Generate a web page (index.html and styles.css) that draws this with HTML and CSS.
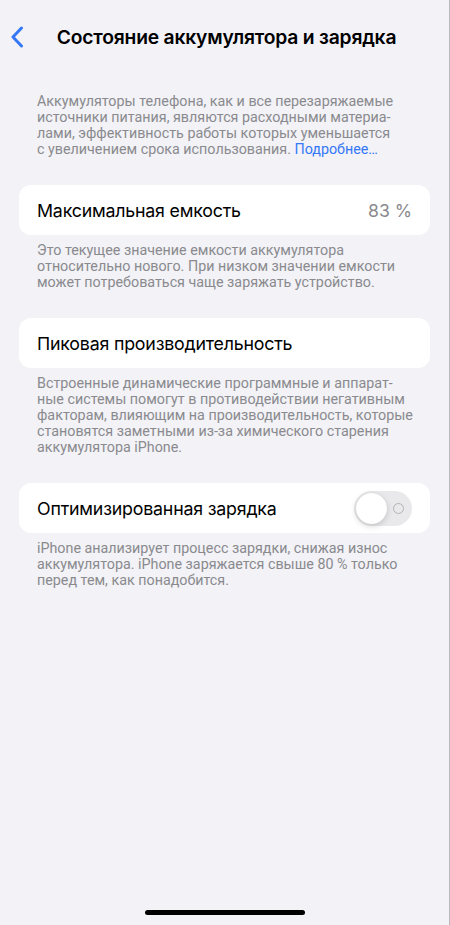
FILE: index.html
```html
<!DOCTYPE html>
<html>
<head>
    <meta charset="utf-8">
    <title>Состояние аккумулятора и зарядка</title>
    <link rel="stylesheet" href="styles.css">
</head>
<body>
    <div class="screen">
        <div class="nav">
            <a class="back" href="#">
                <svg width="14" height="22" viewBox="0 0 14 22">
                    <path d="M11.5 2 L3 11 L11.5 20" fill="none" stroke="#3478f6" stroke-width="3" stroke-linecap="round" stroke-linejoin="round"/>
                </svg>
            </a>
            <h1 class="title">Состояние аккумулятора и зарядка</h1>
        </div>

        <div class="content">
            <p class="note intro">Аккумуляторы телефона, как и все перезаряжаемые<br>источники питания, являются расходными материа-<br>лами, эффективность работы которых уменьшается<br>с увеличением срока использования. <a class="link" href="#">Подробнее…</a></p>

            <div class="card">
                <span class="label">Максимальная емкость</span>
                <span class="value">83 %</span>
            </div>
            <p class="note">Это текущее значение емкости аккумулятора<br>относительно нового. При низком значении емкости<br>может потребоваться чаще заряжать устройство.</p>

            <div class="card">
                <span class="label">Пиковая производительность</span>
            </div>
            <p class="note">Встроенные динамические программные и аппарат-<br>ные системы помогут в противодействии негативным<br>факторам, влияющим на производительность, которые<br>становятся заметными из-за химического старения<br>аккумулятора iPhone.</p>

            <div class="card">
                <span class="label">Оптимизированная зарядка</span>
                <div class="toggle">
                    <span class="knob"></span>
                    <span class="off-mark"></span>
                </div>
            </div>
            <p class="note">iPhone анализирует процесс зарядки, снижая износ<br>аккумулятора. iPhone заряжается свыше 80 % только<br>перед тем, как понадобится.</p>
        </div>

        <div class="home-bar"></div>
    </div>
</body>
</html>
```

FILE: styles.css
```css
* {
    box-sizing: border-box;
}
body {
    margin: 0;
    background-color: #f2f2f7;
    font-family: Inter, "Noto Sans", sans-serif;
    color: #000;
}
.screen {
    width: 450px;
    min-height: 925px;
    display: flex;
    flex-direction: column;
    border-right: 1px solid #b9b9bd;
}
.nav {
    height: 74px;
    display: flex;
    align-items: center;
    justify-content: center;
    position: relative;
}
.back {
    position: absolute;
    left: 10px;
    top: 26px;
    display: block;
    height: 22px;
}
.title {
    margin: 0;
    font-size: 19.3px;
    font-weight: 600;
    letter-spacing: -0.2px;
    padding-left: 4px;
}
.content {
    padding: 0 19px;
}
.note {
    margin: 7px 0 28px;
    padding: 0 18px;
    font-family: Roboto, "Noto Sans", sans-serif;
    font-size: 14.3px;
    line-height: 16px;
    color: #8a8a8e;
    white-space: nowrap;
}
.intro {
    margin-top: 19px;
    margin-bottom: 28px;
}
.link {
    color: #3478f6;
    text-decoration: none;
}
.card {
    height: 50px;
    background-color: #fff;
    border-radius: 12px;
    display: flex;
    align-items: center;
    justify-content: space-between;
    padding: 0 18px;
}
.label {
    font-size: 17.8px;
    letter-spacing: -0.2px;
}
.value {
    font-size: 17.6px;
    color: #8a8a8e;
}
.toggle {
    width: 58px;
    height: 35px;
    border-radius: 18px;
    background-color: #e9e9eb;
    position: relative;
}
.knob {
    position: absolute;
    left: 2px;
    top: 2px;
    width: 31px;
    height: 31px;
    border-radius: 50%;
    background-color: #fff;
    box-shadow: 0 2px 6px rgba(0, 0, 0, 0.16), 0 0 1px rgba(0, 0, 0, 0.12);
}
.off-mark {
    position: absolute;
    right: 8px;
    top: 12px;
    width: 11px;
    height: 11px;
    border-radius: 50%;
    border: 1.4px solid #b3b3b7;
}
.home-bar {
    margin: auto auto 10px;
    width: 160px;
    height: 5px;
    border-radius: 3px;
    background-color: #000;
}
```
